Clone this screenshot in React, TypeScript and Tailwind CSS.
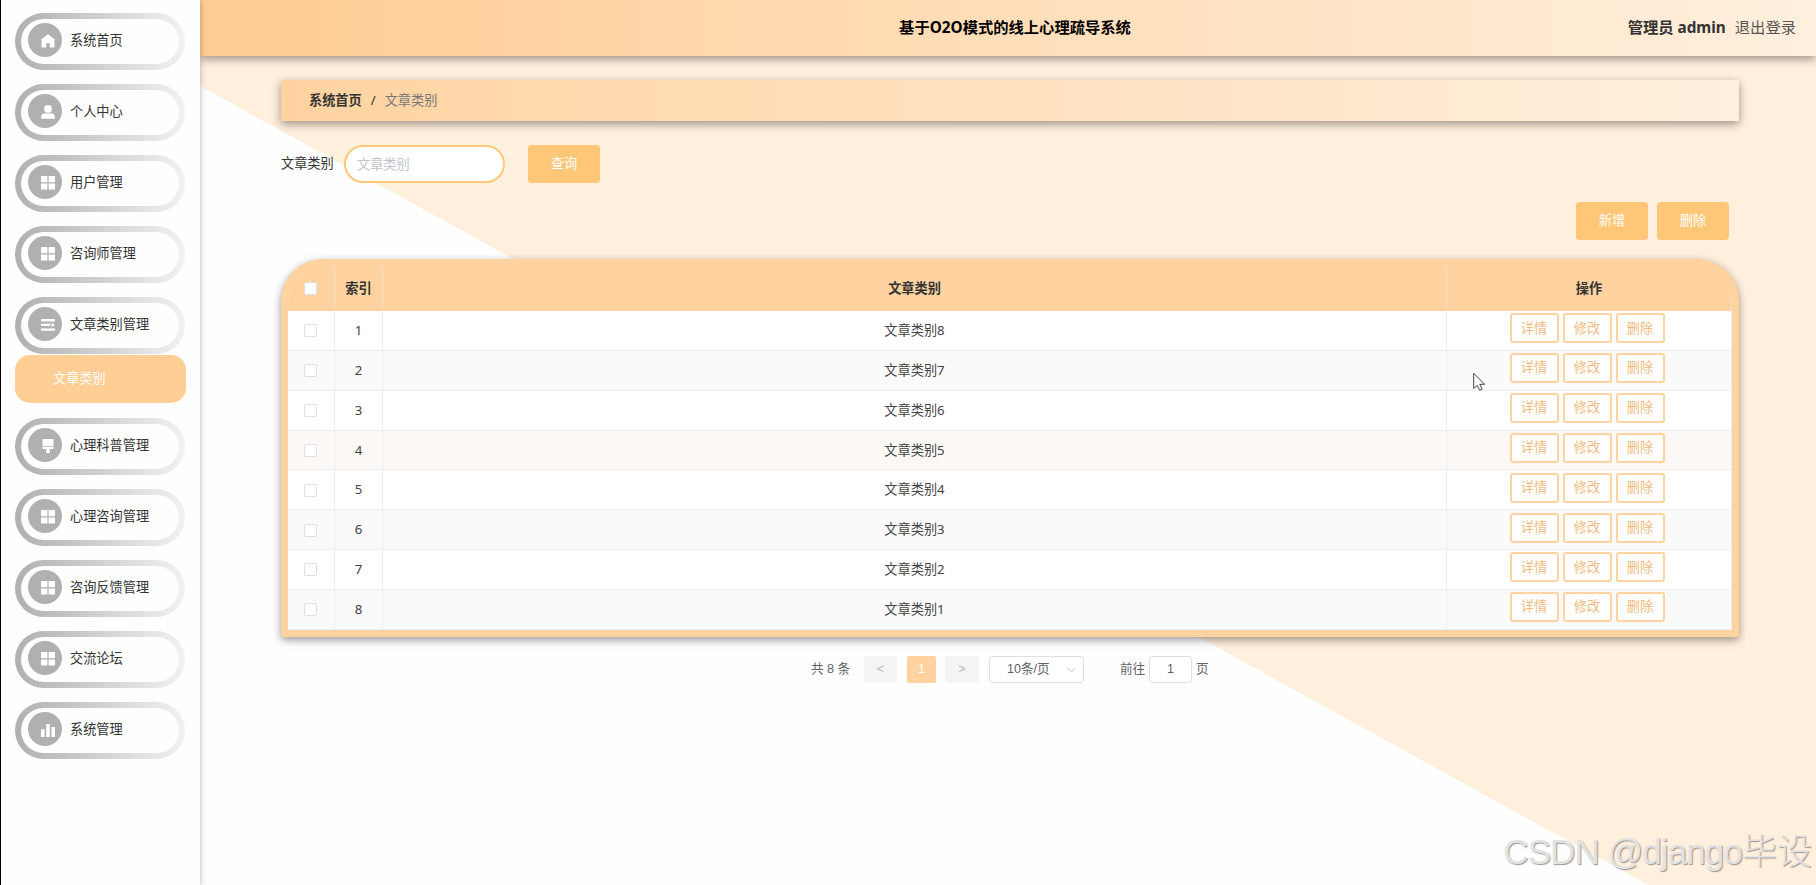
import { ReactNode, useState } from "react"

interface MenuItem {
    name: string
    icon: ReactNode
    children?: string[]
}

const gridIcon = <path d="M0 0h6.4v6.2H0zM7.6 0H14v6.2H7.6zM0 7.4h6.4v6.2H0zM7.6 7.4H14v6.2H7.6z" />
const homeIcon = <path d="M7 0 L14 5.8 L13.4 6.6 V13.5 H8.8 V9.3 H5.2 V13.5 H0.6 V6.6 L0 5.8 Z" />
const userIcon = <path d="M7 0a3.9 3.9 0 1 1 0 7.8A3.9 3.9 0 0 1 7 0zM3.6 8.6h6.8a3.4 3.4 0 0 1 3.4 3.4v1.8H.2V12a3.4 3.4 0 0 1 3.4-3.4z" />
const listIcon = <path d="M0 1h14v2.4H0zM0 5.8h9.4v2.2H0zM10.6 4.6 14 6.9 10.6 9.2zM0 10.4h14v2.4H0z" />
const boardIcon = <path d="M1.5 0h11v7h-11zM1.500 7.8h11v1.4a.8.8 0 0 1-.8.8H8.800v3.200a1.800 1.800 0 0 1-3.600 0V10H2.300a.8.8 0 0 1-.8-.8z" />
const chartIcon = <path d="M0 6.200h3.600V14H0zM5.200 1h3.600v13H5.200zM10.400 4h3.600v10h-3.600z" />

const menus: MenuItem[] = [
    { name: "系统首页", icon: homeIcon },
    { name: "个人中心", icon: userIcon },
    { name: "用户管理", icon: gridIcon },
    { name: "咨询师管理", icon: gridIcon },
    { name: "文章类别管理", icon: listIcon, children: ["文章类别"] },
    { name: "心理科普管理", icon: boardIcon },
    { name: "心理咨询管理", icon: gridIcon },
    { name: "咨询反馈管理", icon: gridIcon },
    { name: "交流论坛", icon: gridIcon },
    { name: "系统管理", icon: chartIcon },
]

const rows = [8, 7, 6, 5, 4, 3, 2, 1].map((n) => `文章类别${n}`)

function Sidebar() {
    return (
        <aside className="relative z-20 w-[200px] shrink-0 border-l border-black bg-[#fefefe] pt-[13px] pl-[14px] shadow-[0_0_6px_rgba(0,0,0,0.3)]">
            {menus.map((menu) => (
                <div key={menu.name} className={menu.children ? "mb-[15px]" : "mb-[14px]"}>
                    <div className="h-[57px] w-[170px] rounded-full bg-linear-to-r from-[#b0b0b0] to-[#f2f2f2] p-[6px]">
                        <div className="flex h-full items-center rounded-full bg-[#fefefe] pl-[6.500px]">
                            <div className="mb-[3px] flex size-[34px] items-center justify-center rounded-full bg-[#b0afb1] pl-[7px]">
                                <svg className="mt-px size-[14px] fill-white" viewBox="0 0 14 14">{menu.icon}</svg>
                            </div>
                            <span className="mb-px ml-[8.500px] text-[13.2px] text-[#333]">{menu.name}</span>
                        </div>
                    </div>
                    {menu.children?.map((child) => (
                        <div key={child} className="mt-px flex h-[48px] w-[171px] items-center rounded-[15px] bg-[#ffce95] pl-[38px] text-[13.2px] text-white">
                            {child}
                        </div>
                    ))}
                </div>
            ))}
        </aside>
    )
}

function Header() {
    return (
        <header className="relative z-10 grid h-14 shrink-0 grid-cols-[1fr_auto_1fr] items-center bg-linear-to-r from-[#ffcc93] to-[#ffefdd] pr-5 pb-px shadow-[0_3px_9px_rgba(0,0,0,0.4)]">
            <span />
            <h1 className="ml-[34px] text-[15.3px] font-bold text-black">基于O2O模式的线上心理疏导系统</h1>
            <div className="flex justify-end gap-[9px] text-[15.3px]">
                <span className="font-bold text-[#333]">管理员 admin</span>
                <span className="text-[#555]">退出登录</span>
            </div>
        </header>
    )
}

function MainButton({ children }: { children: string }) {
    return <button className="h-[38px] w-[72px] rounded bg-[#fec777] text-[13.2px] text-white">{children}</button>
}

function Checkbox() {
    return <span className="block size-[13px] rounded-[2px] border border-[#dcdfe6] bg-white" />
}

const columns = "grid grid-cols-[47px_48px_1fr_285px]"

function Table() {
    return (
        <div className="mt-[19px] h-[378px] overflow-hidden rounded-t-[42px] rounded-b-[3px] border-[7px] border-[#ffd3a0] bg-[#ffdcb5] shadow-[0_3px_9px_rgba(0,0,0,0.4)]">
            <div className={`${columns} h-[45px] rounded-t-[35px] bg-[#ffd3a0] text-[13.2px] font-bold text-[#333] *:flex *:items-center *:justify-center *:border-r *:border-[#f8dfc8]`}>
                <div className="pr-px"><Checkbox /></div>
                <div>索引</div>
                <div>文章类别</div>
                <div>操作</div>
            </div>
            {rows.map((row, index) => (
                <div
                    key={row}
                    className={`${columns} h-[39.85px] border-b border-[#ebeef5] text-[13.2px] text-[#444] *:flex *:items-center *:justify-center *:border-r *:border-[#ebeef5] ${index === 3 ? "bg-[#fcf8f6]" : index % 2 ? "bg-[#fafafa]" : "bg-white"}`}
                >
                    <div className="pt-px pr-px"><Checkbox /></div>
                    <div className="pt-px">{index + 1}</div>
                    <div className="pt-px">{row}</div>
                    <div className="gap-1 pr-1 pb-1">
                        {["详情", "修改", "删除"].map((action) => (
                            <button key={action} className="h-[30px] w-[49px] rounded-[3px] border-2 border-[#ffd3a0] bg-white text-[13.2px] text-[#efba80]">
                                {action}
                            </button>
                        ))}
                    </div>
                </div>
            ))}
        </div>
    )
}

function Pagination() {
    return (
        <div className="mt-[18px] ml-[530px] flex items-center font-['Liberation_Sans','Noto_Sans_CJK_SC',sans-serif] text-[12.6px] text-[#606266]">
            <span className="w-[53px]">共 8 条</span>
            <button className="h-[27px] w-[33px] rounded-[2px] bg-[#f4f4f5] text-[#b5b8bf]">&lt;</button>
            <button className="ml-[10px] h-[27px] w-[29px] rounded-[2px] bg-[#ffd3a0] text-white">1</button>
            <button className="ml-[9px] h-[27px] w-[34px] rounded-[2px] bg-[#f4f4f5] text-[#b5b8bf]">&gt;</button>
            <div className="mt-px ml-[10px] flex h-[27px] w-[95px] items-center justify-between rounded-[3px] border border-[#dcdfe6] bg-white pr-[7px] pl-[17px]">
                10条/页
                <svg className="h-2 w-[9px] fill-none stroke-[#c0c4cc]" viewBox="0 0 9 8"><path d="M.5 2l4 4 4-4" /></svg>
            </div>
            <span className="ml-9 w-[29px]">前往</span>
            <div className="flex h-[27px] w-[43px] items-center justify-center rounded-[3px] border border-[#dcdfe6] bg-white">1</div>
            <span className="ml-1">页</span>
        </div>
    )
}

export default function App() {
    const [keyword, setKeyword] = useState("")

    return (
        <div className="relative flex h-[885px] w-[1816px] overflow-hidden bg-[#fefefe] font-['Noto_Sans','Noto_Sans_CJK_SC',sans-serif]">
            <Sidebar />
            <div className="relative flex flex-1 flex-col">
                <div className="absolute inset-0 bg-[#ffefdd] [clip-path:polygon(0_0,100%_0,100%_100%,1448px_100%,0_86px)]" />
                <Header />
                <main className="relative pt-[24px] pr-[77px] pl-[81px]">
                    <nav className="flex h-[41px] items-center bg-linear-to-r from-[#ffd3a0] to-[#ffefdd] pl-7 text-[13.2px] shadow-[0_3px_9px_rgba(0,0,0,0.4)]">
                        <span className="font-bold text-[#333]">系统首页</span>
                        <span className="mx-[9px] text-[#333]">/</span>
                        <span className="text-[#777]">文章类别</span>
                    </nav>
                    <div className="mt-6 flex items-center text-[13.2px] text-[#333]">
                        <label className="w-[63px]">文章类别</label>
                        <input
                            className="mr-[23px] h-[38px] w-[161px] rounded-full border-2 border-[#fec777] bg-white px-[11px] placeholder:text-[#c0c4cc]"
                            placeholder="文章类别"
                            value={keyword}
                            onChange={(e) => setKeyword(e.target.value)}
                        />
                        <MainButton>查询</MainButton>
                    </div>
                    <div className="mt-[19px] flex justify-end gap-[9px] pr-[10px]">
                        <MainButton>新增</MainButton>
                        <MainButton>删除</MainButton>
                    </div>
                    <Table />
                    <Pagination />
                </main>
            </div>
            <svg className="absolute top-[372px] left-[1473px] z-30 h-[20px] w-[13px] fill-white stroke-[#444]" viewBox="0 0 13 20">
                <path d="M.7 1.300v15.200l3.500-3.200 2.500 5 2.500-1.200-2.400-4.800h4.800z" />
            </svg>
            <div className="absolute top-[826px] right-[4px] z-30 font-['Liberation_Sans','Noto_Sans_CJK_SC',sans-serif] text-[35px] leading-[52px] font-light tracking-[-0.9px] whitespace-nowrap text-[#e2e2e2] [text-shadow:1px_1px_1px_rgba(110,110,110,0.7)]">
                CSDN @django<span className="tracking-normal">毕设</span>
            </div>
        </div>
    )
}
